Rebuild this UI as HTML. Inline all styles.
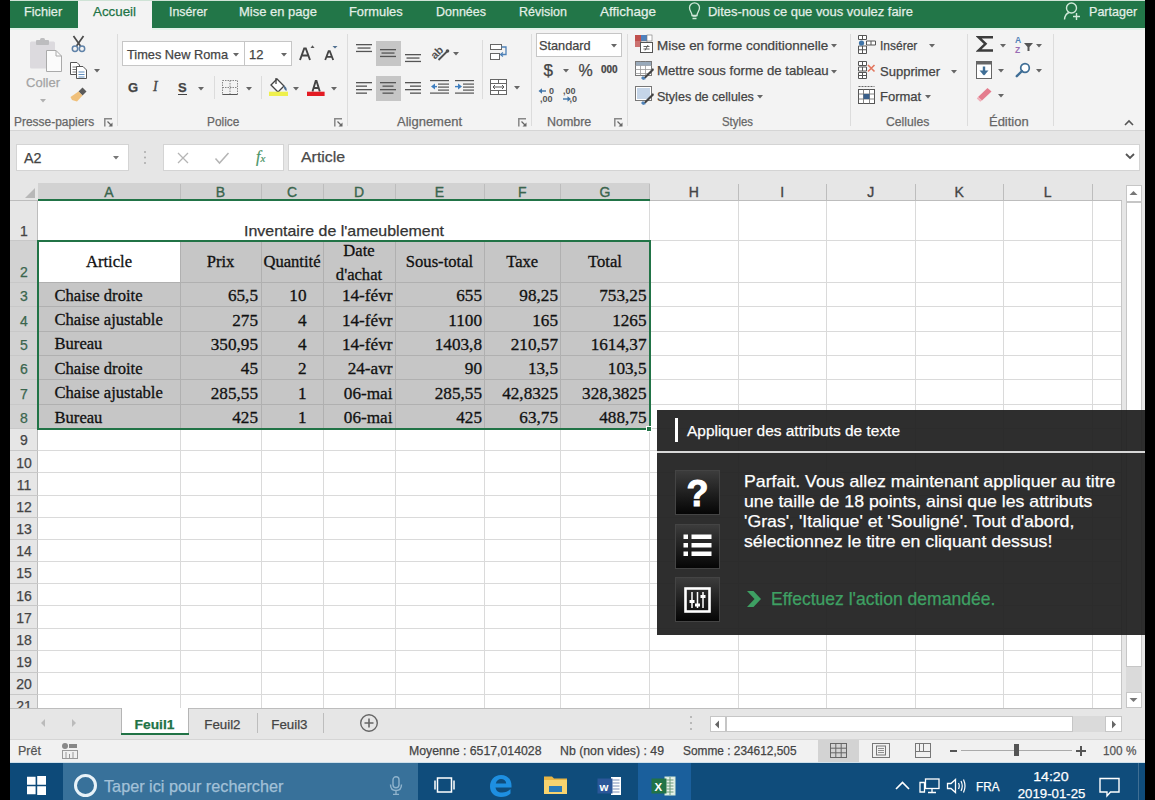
<!DOCTYPE html><html><head><meta charset="utf-8"><style>
*{box-sizing:border-box;margin:0;padding:0}
html,body{width:1155px;height:800px;overflow:hidden;background:#000;position:relative}
body>div,body>svg{position:absolute}
.t{white-space:nowrap;line-height:1}
.b{-webkit-text-stroke:0.3px currentColor}
</style></head><body>
<div style="left:10px;top:0px;width:1135px;height:763px;background:#e6e6e6"></div>
<div style="left:10px;top:0px;width:1135px;height:1px;background:#cfe3d6"></div>
<div style="left:10px;top:1px;width:1135px;height:27.5px;background:#227648"></div>
<div style="left:78px;top:1px;width:74px;height:28px;background:#f3f3f3"></div>
<div class="t" style="left:24.4px;top:4.77px;font-size:13.5px;color:#e3efe7;font-family:'Liberation Sans',sans-serif;-webkit-text-stroke:0.25px #e3efe7;"><span id="f0" style="display:inline-block;transform:scaleX(0.9428);transform-origin:left">Fichier</span></div>
<div class="t" style="left:168.5px;top:4.77px;font-size:13.5px;color:#e3efe7;font-family:'Liberation Sans',sans-serif;-webkit-text-stroke:0.25px #e3efe7;"><span id="f1" style="display:inline-block;transform:scaleX(0.9160);transform-origin:left">Insérer</span></div>
<div class="t" style="left:239px;top:4.77px;font-size:13.5px;color:#e3efe7;font-family:'Liberation Sans',sans-serif;-webkit-text-stroke:0.25px #e3efe7;"><span id="f2" style="display:inline-block;transform:scaleX(0.9622);transform-origin:left">Mise en page</span></div>
<div class="t" style="left:349.3px;top:4.77px;font-size:13.5px;color:#e3efe7;font-family:'Liberation Sans',sans-serif;-webkit-text-stroke:0.25px #e3efe7;"><span id="f3" style="display:inline-block;transform:scaleX(0.9544);transform-origin:left">Formules</span></div>
<div class="t" style="left:436px;top:4.77px;font-size:13.5px;color:#e3efe7;font-family:'Liberation Sans',sans-serif;-webkit-text-stroke:0.25px #e3efe7;"><span id="f4" style="display:inline-block;transform:scaleX(0.9251);transform-origin:left">Données</span></div>
<div class="t" style="left:519px;top:4.77px;font-size:13.5px;color:#e3efe7;font-family:'Liberation Sans',sans-serif;-webkit-text-stroke:0.25px #e3efe7;"><span id="f5" style="display:inline-block;transform:scaleX(0.9270);transform-origin:left">Révision</span></div>
<div class="t" style="left:599.6px;top:4.77px;font-size:13.5px;color:#e3efe7;font-family:'Liberation Sans',sans-serif;-webkit-text-stroke:0.25px #e3efe7;"><span id="f6" style="display:inline-block;transform:scaleX(0.9992);transform-origin:left">Affichage</span></div>
<div class="t" style="left:708px;top:4.77px;font-size:13.5px;color:#e3efe7;font-family:'Liberation Sans',sans-serif;-webkit-text-stroke:0.25px #e3efe7;"><span id="f7" style="display:inline-block;transform:scaleX(0.9585);transform-origin:left">Dites-nous ce que vous voulez faire</span></div>
<div class="t" style="left:1088.6px;top:4.77px;font-size:13.5px;color:#e3efe7;font-family:'Liberation Sans',sans-serif;-webkit-text-stroke:0.25px #e3efe7;"><span id="f8" style="display:inline-block;transform:scaleX(0.9308);transform-origin:left">Partager</span></div>
<div class="t" style="left:93px;top:4.77px;font-size:13.5px;color:#217346;font-family:'Liberation Sans',sans-serif;-webkit-text-stroke:0.25px #217346;"><span id="f9" style="display:inline-block;transform:scaleX(0.9878);transform-origin:left">Accueil</span></div>
<svg style="left:688px;top:2px;" width="13" height="18" viewBox="0 0 13 18"><path d="M4 13.5C4 10.5 1.5 9 1.5 5.8A5 5 0 0 1 11.5 5.8C11.5 9 9 10.5 9 13.5Z" fill="none" stroke="#cfe8d8" stroke-width="1.3"/><path d="M4.5 14H8.5M4.5 16.5H8.5" stroke="#cfe8d8" stroke-width="1.3"/></svg>
<svg style="left:1063px;top:1px;" width="20" height="20" viewBox="0 0 20 20"><circle cx="8.5" cy="7" r="5" fill="none" stroke="#cfe8d8" stroke-width="1.4"/><path d="M1.5 18.5Q2 13 6 11.5" fill="none" stroke="#cfe8d8" stroke-width="1.4"/><path d="M13.5 12V19M10 15.5H17" stroke="#cfe8d8" stroke-width="1.4"/></svg>
<div style="left:10px;top:28px;width:1135px;height:102px;background:#f3f3f3"></div>
<div style="left:10px;top:28px;width:1135px;height:1.5px;background:#e2f2e8"></div>
<div style="left:78px;top:28px;width:74px;height:2px;background:#f3f3f3"></div>
<div style="left:10px;top:130px;width:1135px;height:1px;background:#d5d5d5"></div>
<svg style="left:28px;top:37.5px;" width="36" height="38" viewBox="0 0 36 38"><rect x="2" y="3.5" width="25" height="27" rx="1.5" fill="#dcdade"/><rect x="8" y="2" width="13" height="5" rx="1" fill="#bdbdbf"/><rect x="12" y="0" width="5" height="4" rx="1.5" fill="#bdbdbf"/><path d="M18.5 12.5H28L33.5 18V33.5H18.5Z" fill="#fbfbfb" stroke="#aaa"/><path d="M28 12.5V18H33.5" fill="none" stroke="#aaa"/></svg>
<div class="t" style="left:25.8px;top:75.57px;font-size:13.5px;color:#a3a3a3;font-family:'Liberation Sans',sans-serif;-webkit-text-stroke:0.25px #a3a3a3;"><span id="f10" style="display:inline-block;transform:scaleX(0.9641);transform-origin:left">Coller</span></div>
<svg style="left:40px;top:98.5px;" width="6" height="4" viewBox="0 0 6 4"><path d="M0 0H6L3 3.5Z" fill="#b0b0b0"/></svg>
<svg style="left:70px;top:35px;" width="18" height="18" viewBox="0 0 18 18"><path d="M3.5 1L10.5 11M13.5 1L6.5 11" stroke="#4a4a4a" stroke-width="1.7" fill="none"/><circle cx="5" cy="13.8" r="2.7" fill="none" stroke="#5f82a8" stroke-width="1.5"/><circle cx="12" cy="13.8" r="2.7" fill="none" stroke="#5f82a8" stroke-width="1.5"/></svg>
<svg style="left:69px;top:61px;" width="19" height="18" viewBox="0 0 19 18"><path d="M1.5 1.5H8L10.5 4V13.5H1.5Z" fill="#fff" stroke="#555"/><path d="M3.5 6H8.5M3.5 8.5H8.5M3.5 11H8.5" stroke="#555" stroke-width="0.8"/><path d="M7.5 5.5H14L17.5 9V17.5H7.5Z" fill="#fff" stroke="#555"/><path d="M9.5 11H15.5M9.5 13.5H15.5M9.5 16H15.5" stroke="#4f82b8" stroke-width="0.9"/></svg>
<svg style="left:94px;top:68.5px;" width="6" height="4" viewBox="0 0 6 4"><path d="M0 0H6L3 3.5Z" fill="#666"/></svg>
<svg style="left:69px;top:86px;" width="20" height="17" viewBox="0 0 20 17"><path d="M13.5 1.5L17.5 5.5L13.5 9.5L9.5 5.5Z" fill="#5a5a5a"/><path d="M9.5 5.5L13.5 9.5L8 15.5L3 14L1.5 11Z" fill="#f0c07a"/></svg>
<div class="t" style="left:14px;top:116.42px;font-size:12.5px;color:#666;font-family:'Liberation Sans',sans-serif;-webkit-text-stroke:0.25px #666;"><span id="f11" style="display:inline-block;transform:scaleX(0.9551);transform-origin:left">Presse-papiers</span></div>
<svg style="left:104px;top:118px;" width="9" height="9" viewBox="0 0 9 9"><path d="M0.8 8.5V0.8H8" fill="none" stroke="#888" stroke-width="1.5"/><path d="M3.5 3.5L7 7" stroke="#666" stroke-width="1.2"/><path d="M8.5 4.5V8.5H4.5Z" fill="#666"/></svg>
<div style="left:117px;top:34px;width:1px;height:92px;background:#dcdcdc"></div>
<div style="left:122px;top:41px;width:123px;height:25px;background:#fff;border:1px solid #c6c6c6"></div>
<div style="left:244px;top:41px;width:48px;height:25px;background:#fff;border:1px solid #c6c6c6"></div>
<div class="t" style="left:126.5px;top:47.5px;font-size:13px;color:#444;font-family:'Liberation Sans',sans-serif;-webkit-text-stroke:0.25px #444;"><span id="f12" style="display:inline-block;transform:scaleX(0.9822);transform-origin:left">Times New Roma</span></div>
<svg style="left:232.5px;top:52.5px;" width="6" height="4" viewBox="0 0 6 4"><path d="M0 0H6L3 3.5Z" fill="#666"/></svg>
<div class="t" style="left:249px;top:47.5px;font-size:13px;color:#444;font-family:'Liberation Sans',sans-serif;-webkit-text-stroke:0.25px #444;">12</div>
<svg style="left:281px;top:52.5px;" width="6" height="4" viewBox="0 0 6 4"><path d="M0 0H6L3 3.5Z" fill="#666"/></svg>
<svg style="left:298px;top:44px;" width="18" height="18" viewBox="0 0 18 18"><path d="M2 16L6.2 4.5H7.8L12 16M3.8 11.5H10.2" fill="none" stroke="#444" stroke-width="1.9"/><path d="M12.5 4L14.5 1.2L16.5 4Z" fill="#555"/></svg>
<svg style="left:323px;top:46px;" width="18" height="16" viewBox="0 0 18 16"><path d="M2.2 14L5.6 5.2H6.8L10.2 14M3.6 10.8H8.8" fill="none" stroke="#444" stroke-width="1.8"/><path d="M9.5 0H14.5L12 2.6Z" fill="#4f6f90"/></svg>
<div class="t" style="left:128px;top:81.0px;font-size:13px;color:#444;font-family:'Liberation Sans',sans-serif;-webkit-text-stroke:0.25px #444;font-weight:bold">G</div>
<div class="t" style="left:153px;top:80.28px;font-size:14px;color:#444;font-family:'Liberation Serif',serif;-webkit-text-stroke:0.3px #444;font-style:italic">I</div>
<div class="t" style="left:178px;top:81.0px;font-size:13px;color:#444;font-family:'Liberation Sans',sans-serif;-webkit-text-stroke:0.25px #444;font-weight:bold">S</div>
<div style="left:178px;top:94px;width:9px;height:1px;background:#444"></div>
<svg style="left:198px;top:86.5px;" width="6" height="4" viewBox="0 0 6 4"><path d="M0 0H6L3 3.5Z" fill="#666"/></svg>
<div style="left:213.5px;top:76px;width:1px;height:23px;background:#dcdcdc"></div>
<svg style="left:221px;top:79px;" width="18" height="17" viewBox="0 0 18 17"><path d="M1.5 1.5H16.5V15.5H1.5Z" fill="none" stroke="#888" stroke-dasharray="1.5 1"/><path d="M9 1.5V15.5M1.5 8.5H16.5" stroke="#888" stroke-dasharray="1.5 1"/><path d="M1.5 15.5H16.5" stroke="#555"/></svg>
<svg style="left:245.5px;top:86.5px;" width="6" height="4" viewBox="0 0 6 4"><path d="M0 0H6L3 3.5Z" fill="#666"/></svg>
<div style="left:261px;top:76px;width:1px;height:23px;background:#dcdcdc"></div>
<svg style="left:268px;top:77px;" width="21" height="21" viewBox="0 0 21 21"><path d="M3 8L9 2L16 9L10 15Z" fill="#fff" stroke="#444" stroke-width="1.3"/><path d="M8 1V7" stroke="#444" stroke-width="1.3"/><path d="M15.5 8.5Q19.5 10 18.5 14Q16 13 15.5 8.5Z" fill="#4f6f90"/><rect x="1" y="14.7" width="19" height="4.3" fill="#eff04c"/></svg>
<svg style="left:293px;top:86.5px;" width="6" height="4" viewBox="0 0 6 4"><path d="M0 0H6L3 3.5Z" fill="#666"/></svg>
<svg style="left:306px;top:77px;" width="20" height="21" viewBox="0 0 20 21"><path d="M6.5 14.5L9.7 4H10.5L13.8 14.5M7.6 11H12.7" fill="none" stroke="#444" stroke-width="1.9"/><rect x="1" y="14.7" width="17.6" height="4.3" fill="#e31b23"/></svg>
<svg style="left:331px;top:86.5px;" width="6" height="4" viewBox="0 0 6 4"><path d="M0 0H6L3 3.5Z" fill="#666"/></svg>
<div class="t" style="left:206.6px;top:116.42px;font-size:12.5px;color:#666;font-family:'Liberation Sans',sans-serif;-webkit-text-stroke:0.25px #666;"><span id="f13" style="display:inline-block;transform:scaleX(0.9487);transform-origin:left">Police</span></div>
<svg style="left:334px;top:118px;" width="9" height="9" viewBox="0 0 9 9"><path d="M0.8 8.5V0.8H8" fill="none" stroke="#888" stroke-width="1.5"/><path d="M3.5 3.5L7 7" stroke="#666" stroke-width="1.2"/><path d="M8.5 4.5V8.5H4.5Z" fill="#666"/></svg>
<div style="left:346.5px;top:34px;width:1px;height:92px;background:#dcdcdc"></div>
<div style="left:375.5px;top:41px;width:25px;height:25px;background:#c6c6c6"></div>
<div style="left:375.5px;top:75.5px;width:25px;height:25px;background:#c6c6c6"></div>
<svg style="left:355.5px;top:44px;" width="18" height="14" viewBox="0 0 18 14"><rect x="0" y="0.0" width="16" height="1.3" fill="#555"/><rect x="1.5" y="3.4" width="13" height="1.3" fill="#555"/><rect x="0" y="6.8" width="16" height="1.3" fill="#555"/></svg>
<svg style="left:380px;top:48.5px;" width="18" height="14" viewBox="0 0 18 14"><rect x="0" y="0.0" width="16" height="1.3" fill="#555"/><rect x="1.5" y="3.4" width="13" height="1.3" fill="#555"/><rect x="0" y="6.8" width="16" height="1.3" fill="#555"/></svg>
<svg style="left:405px;top:53.8px;" width="18" height="14" viewBox="0 0 18 14"><rect x="0" y="0.0" width="16" height="1.3" fill="#555"/><rect x="1.5" y="3.4" width="13" height="1.3" fill="#555"/><rect x="0" y="6.8" width="16" height="1.3" fill="#555"/></svg>
<svg style="left:355.5px;top:81.5px;" width="18" height="14" viewBox="0 0 18 14"><rect x="0" y="0.0" width="16" height="1.3" fill="#555"/><rect x="0" y="3.5" width="11" height="1.3" fill="#555"/><rect x="0" y="7.0" width="16" height="1.3" fill="#555"/><rect x="0" y="10.5" width="11" height="1.3" fill="#555"/></svg>
<svg style="left:380px;top:81.5px;" width="18" height="14" viewBox="0 0 18 14"><rect x="0" y="0.0" width="16" height="1.3" fill="#555"/><rect x="2.5" y="3.5" width="11" height="1.3" fill="#555"/><rect x="0" y="7.0" width="16" height="1.3" fill="#555"/><rect x="2.5" y="10.5" width="11" height="1.3" fill="#555"/></svg>
<svg style="left:405px;top:81.5px;" width="18" height="14" viewBox="0 0 18 14"><rect x="0" y="0.0" width="16" height="1.3" fill="#555"/><rect x="5" y="3.5" width="11" height="1.3" fill="#555"/><rect x="0" y="7.0" width="16" height="1.3" fill="#555"/><rect x="5" y="10.5" width="11" height="1.3" fill="#555"/></svg>
<svg style="left:428px;top:42px;" width="22" height="22" viewBox="0 0 22 22"><g transform="rotate(-45 9 10)"><text x="2" y="14" font-family="Liberation Sans" font-size="11" font-weight="bold" fill="#505050">ab</text></g><path d="M10.5 18L19 9.5" stroke="#505050" stroke-width="1.8"/><circle cx="19.5" cy="9" r="1.8" fill="#505050"/></svg>
<svg style="left:453px;top:51.5px;" width="6" height="4" viewBox="0 0 6 4"><path d="M0 0H6L3 3.5Z" fill="#666"/></svg>
<svg style="left:430px;top:80px;" width="20" height="14" viewBox="0 0 20 14"><rect x="0" y="12.5" width="19" height="1.2" fill="#555"/><rect x="0" y="0" width="19" height="1.2" fill="#555"/><rect x="8" y="3.5" width="11" height="1.2" fill="#555"/><rect x="8" y="6.5" width="11" height="1.2" fill="#555"/><rect x="8" y="9.5" width="11" height="1.2" fill="#555"/><path d="M1 6.5L5 3.5V9.5Z" fill="#3f7fc0"/><rect x="3" y="5.9" width="4" height="1.4" fill="#3f7fc0"/></svg>
<svg style="left:455px;top:80px;" width="20" height="14" viewBox="0 0 20 14"><rect x="0" y="12.5" width="19" height="1.2" fill="#555"/><rect x="0" y="0" width="19" height="1.2" fill="#555"/><rect x="8" y="3.5" width="11" height="1.2" fill="#555"/><rect x="8" y="6.5" width="11" height="1.2" fill="#555"/><rect x="8" y="9.5" width="11" height="1.2" fill="#555"/><path d="M7 6.5L3 3.5V9.5Z" fill="#3f7fc0"/><rect x="0" y="5.9" width="4" height="1.4" fill="#3f7fc0"/></svg>
<div style="left:481.5px;top:40px;width:1px;height:59px;background:#dcdcdc"></div>
<svg style="left:489px;top:43px;" width="20" height="19" viewBox="0 0 20 19"><rect x="1.5" y="1.5" width="11" height="5" fill="#fff" stroke="#666"/><rect x="1.5" y="10.5" width="9" height="6" fill="#fff" stroke="#666"/><path d="M12.5 4H17V11.5H12" fill="none" stroke="#4f82b8" stroke-width="1.3"/><path d="M14 9.5L11.5 11.5L14 13.5" fill="none" stroke="#4f82b8" stroke-width="1.3"/></svg>
<svg style="left:489px;top:78px;" width="19" height="18" viewBox="0 0 19 18"><rect x="1.5" y="1.5" width="16" height="15" fill="#fff" stroke="#666"/><path d="M1.5 5.5H17.5M1.5 12.5H17.5M9.5 1.5V5.5M9.5 12.5V16.5" stroke="#666"/><path d="M4 9H15M6 7L4 9L6 11M13 7L15 9L13 11" fill="none" stroke="#555" stroke-width="1"/></svg>
<svg style="left:513.5px;top:85.5px;" width="6" height="4" viewBox="0 0 6 4"><path d="M0 0H6L3 3.5Z" fill="#666"/></svg>
<div class="t" style="left:397px;top:116.42px;font-size:12.5px;color:#666;font-family:'Liberation Sans',sans-serif;-webkit-text-stroke:0.25px #666;"><span id="f14" style="display:inline-block;transform:scaleX(1.0392);transform-origin:left">Alignement</span></div>
<svg style="left:518px;top:118px;" width="9" height="9" viewBox="0 0 9 9"><path d="M0.8 8.5V0.8H8" fill="none" stroke="#888" stroke-width="1.5"/><path d="M3.5 3.5L7 7" stroke="#666" stroke-width="1.2"/><path d="M8.5 4.5V8.5H4.5Z" fill="#666"/></svg>
<div style="left:530.5px;top:34px;width:1px;height:92px;background:#dcdcdc"></div>
<div style="left:535.5px;top:32.5px;width:86px;height:24.5px;background:#fff;border:1px solid #c6c6c6"></div>
<div class="t" style="left:538.9px;top:38.5px;font-size:13px;color:#444;font-family:'Liberation Sans',sans-serif;-webkit-text-stroke:0.25px #444;"><span id="f15" style="display:inline-block;transform:scaleX(0.9779);transform-origin:left">Standard</span></div>
<svg style="left:610.5px;top:43.5px;" width="6" height="4" viewBox="0 0 6 4"><path d="M0 0H6L3 3.5Z" fill="#666"/></svg>
<div class="t" style="left:543.5px;top:61.61px;font-size:17px;color:#444;font-family:'Liberation Sans',sans-serif;-webkit-text-stroke:0.25px #444;">$</div>
<svg style="left:563px;top:68.5px;" width="6" height="4" viewBox="0 0 6 4"><path d="M0 0H6L3 3.5Z" fill="#666"/></svg>
<div class="t" style="left:578.5px;top:63.26px;font-size:16px;color:#444;font-family:'Liberation Sans',sans-serif;-webkit-text-stroke:0.25px #444;">%</div>
<div class="t" style="left:601px;top:65.03px;font-size:10px;color:#444;font-family:'Liberation Sans',sans-serif;-webkit-text-stroke:0.25px #444;font-weight:bold">000</div>
<svg style="left:537px;top:85px;" width="20" height="19" viewBox="0 0 20 19"><text x="12" y="9" font-family="Liberation Sans" font-size="9" font-weight="bold" fill="#555">0</text><text x="3" y="16.8" font-family="Liberation Sans" font-size="9" font-weight="bold" fill="#555">,00</text><path d="M1.5 6L5 3.2V8.8Z" fill="#3f74a8"/><rect x="4" y="5.3" width="5" height="1.4" fill="#3f74a8"/></svg>
<svg style="left:561px;top:85px;" width="20" height="19" viewBox="0 0 20 19"><text x="2" y="9" font-family="Liberation Sans" font-size="9" font-weight="bold" fill="#555">,00</text><text x="8.5" y="16.8" font-family="Liberation Sans" font-size="9" font-weight="bold" fill="#555">,0</text><path d="M10 14L6.5 11.2V16.8Z" fill="#3f74a8"/><rect x="2" y="13.3" width="5" height="1.4" fill="#3f74a8"/></svg>
<div class="t" style="left:547px;top:116.42px;font-size:12.5px;color:#666;font-family:'Liberation Sans',sans-serif;-webkit-text-stroke:0.25px #666;"><span id="f16" style="display:inline-block;transform:scaleX(0.9962);transform-origin:left">Nombre</span></div>
<svg style="left:614px;top:118px;" width="9" height="9" viewBox="0 0 9 9"><path d="M0.8 8.5V0.8H8" fill="none" stroke="#888" stroke-width="1.5"/><path d="M3.5 3.5L7 7" stroke="#666" stroke-width="1.2"/><path d="M8.5 4.5V8.5H4.5Z" fill="#666"/></svg>
<div style="left:627px;top:34px;width:1px;height:92px;background:#dcdcdc"></div>
<svg style="left:634px;top:34px;" width="20" height="20" viewBox="0 0 20 20"><rect x="1" y="1" width="6" height="6" fill="#c0504d"/><rect x="1" y="7" width="6" height="6" fill="#c0504d" opacity=".8"/><rect x="7" y="1" width="6" height="6" fill="#4f81bd"/><rect x="7" y="7" width="6" height="6" fill="#fff" stroke="#777" stroke-width=".6"/><rect x="13" y="1" width="5" height="6" fill="#fff" stroke="#777" stroke-width=".6"/><rect x="6.5" y="8.5" width="12" height="10" fill="#fff" stroke="#555"/><path d="M9.5 12.5H15.5M9.5 15H15.5M14 11L11 16.5" stroke="#555" stroke-width=".9"/></svg>
<div class="t" style="left:656.6px;top:38.5px;font-size:13px;color:#444;font-family:'Liberation Sans',sans-serif;-webkit-text-stroke:0.25px #444;"><span id="f17" style="display:inline-block;transform:scaleX(1.0345);transform-origin:left">Mise en forme conditionnelle</span></div>
<svg style="left:830.5px;top:43.5px;" width="6" height="4" viewBox="0 0 6 4"><path d="M0 0H6L3 3.5Z" fill="#666"/></svg>
<svg style="left:634px;top:60px;" width="20" height="20" viewBox="0 0 20 20"><rect x="1.5" y="1.5" width="16" height="14" fill="#fff" stroke="#777"/><path d="M1.5 5.5H17.5M1.5 9.5H17.5M1.5 13.5H17.5M6.5 1.5V15.5M11.5 1.5V15.5" stroke="#999" stroke-width=".8"/><rect x="2" y="2" width="15" height="3.5" fill="#9ab"/><path d="M19 8L11 16L9 19L12 18L20 10Z" fill="#444"/><path d="M9 16L12 19L9 20L7 18Z" fill="#4f82b8"/></svg>
<div class="t" style="left:656.6px;top:64.0px;font-size:13px;color:#444;font-family:'Liberation Sans',sans-serif;-webkit-text-stroke:0.25px #444;"><span id="f18" style="display:inline-block;transform:scaleX(1.0148);transform-origin:left">Mettre sous forme de tableau</span></div>
<svg style="left:830.5px;top:69.5px;" width="6" height="4" viewBox="0 0 6 4"><path d="M0 0H6L3 3.5Z" fill="#666"/></svg>
<svg style="left:634px;top:85px;" width="20" height="20" viewBox="0 0 20 20"><rect x="1.5" y="1.5" width="16" height="14" fill="#fff" stroke="#777"/><rect x="3" y="3" width="13" height="11" fill="#c5d5e8"/><path d="M19 8L11 16L9 19L12 18L20 10Z" fill="#444"/><path d="M9 16L12 19L9 20L7 18Z" fill="#4f82b8"/></svg>
<div class="t" style="left:656.6px;top:89.5px;font-size:13px;color:#444;font-family:'Liberation Sans',sans-serif;-webkit-text-stroke:0.25px #444;"><span id="f19" style="display:inline-block;transform:scaleX(0.9646);transform-origin:left">Styles de cellules</span></div>
<svg style="left:756.5px;top:94.5px;" width="6" height="4" viewBox="0 0 6 4"><path d="M0 0H6L3 3.5Z" fill="#666"/></svg>
<div class="t" style="left:722px;top:116.42px;font-size:12.5px;color:#666;font-family:'Liberation Sans',sans-serif;-webkit-text-stroke:0.25px #666;"><span id="f20" style="display:inline-block;transform:scaleX(0.9105);transform-origin:left">Styles</span></div>
<div style="left:849.5px;top:34px;width:1px;height:92px;background:#dcdcdc"></div>
<svg style="left:857px;top:35px;" width="20" height="19" viewBox="0 0 20 19"><path d="M1.5 0.5H9.5V4.5H1.5Z M5.5 0.5V4.5 M1.5 11H9.5V18.5H1.5Z M1.5 14.75H9.5 M5.5 11V18.5 M9.5 6H18.5V10H9.5Z M14 6V10" fill="#fff" stroke="#555" stroke-width="1"/><circle cx="4.5" cy="8" r="2.6" fill="#3f74a8"/></svg>
<div class="t" style="left:879.7px;top:39.0px;font-size:13px;color:#444;font-family:'Liberation Sans',sans-serif;-webkit-text-stroke:0.25px #444;"><span id="f21" style="display:inline-block;transform:scaleX(0.9217);transform-origin:left">Insérer</span></div>
<svg style="left:929px;top:43.5px;" width="6" height="4" viewBox="0 0 6 4"><path d="M0 0H6L3 3.5Z" fill="#666"/></svg>
<svg style="left:857px;top:60px;" width="20" height="19" viewBox="0 0 20 19"><path d="M1.5 1.5H9.5V5.5H1.5Z M5.5 1.5V5.5 M1.5 12.5H9.5V18.5H1.5Z M1.5 15.5H9.5 M5.5 12.5V18.5 M1.5 7H9.5V11H1.5Z M5.5 7V11" fill="#fff" stroke="#555" stroke-width="1"/><path d="M11 5L17.5 11.5M17.5 5L11 11.5" stroke="#e2775f" stroke-width="1.6"/></svg>
<div class="t" style="left:879.7px;top:64.5px;font-size:13px;color:#444;font-family:'Liberation Sans',sans-serif;-webkit-text-stroke:0.25px #444;"><span id="f22" style="display:inline-block;transform:scaleX(1.0005);transform-origin:left">Supprimer</span></div>
<svg style="left:950.5px;top:69.5px;" width="6" height="4" viewBox="0 0 6 4"><path d="M0 0H6L3 3.5Z" fill="#666"/></svg>
<svg style="left:857px;top:85px;" width="20" height="20" viewBox="0 0 20 20"><rect x="1.5" y="4.5" width="16" height="14" fill="#fff" stroke="#555"/><path d="M1.5 9H17.5M1.5 14H17.5M6.5 4.5V18.5M12.5 4.5V18.5" stroke="#777" stroke-width=".9"/><rect x="6.5" y="9" width="6" height="5" fill="#3a5f8a"/><path d="M1.5 1.5H17.5" stroke="#666" stroke-dasharray="2 1"/></svg>
<div class="t" style="left:879.7px;top:90.0px;font-size:13px;color:#444;font-family:'Liberation Sans',sans-serif;-webkit-text-stroke:0.25px #444;"><span id="f23" style="display:inline-block;transform:scaleX(1.0007);transform-origin:left">Format</span></div>
<svg style="left:924.5px;top:94.5px;" width="6" height="4" viewBox="0 0 6 4"><path d="M0 0H6L3 3.5Z" fill="#666"/></svg>
<div class="t" style="left:886.2px;top:116.42px;font-size:12.5px;color:#666;font-family:'Liberation Sans',sans-serif;-webkit-text-stroke:0.25px #666;"><span id="f24" style="display:inline-block;transform:scaleX(0.9737);transform-origin:left">Cellules</span></div>
<div style="left:967px;top:34px;width:1px;height:92px;background:#dcdcdc"></div>
<svg style="left:975.5px;top:35px;" width="19" height="18" viewBox="0 0 19 18"><path d="M17 2.2H2.5L9.5 8.8L2.5 15.5H17" fill="none" stroke="#3c3c3c" stroke-width="2.5" stroke-linejoin="miter"/></svg>
<svg style="left:999.5px;top:43.5px;" width="6" height="4" viewBox="0 0 6 4"><path d="M0 0H6L3 3.5Z" fill="#666"/></svg>
<svg style="left:1014px;top:35px;" width="20" height="19" viewBox="0 0 20 19"><text x="1" y="8" font-family="Liberation Sans" font-size="8.5" font-weight="bold" fill="#4f82b8">A</text><text x="1" y="17.5" font-family="Liberation Sans" font-size="8.5" font-weight="bold" fill="#9a6db5">Z</text><path d="M10 8H19L15.5 12V16H13.5V12Z" fill="#555"/></svg>
<svg style="left:1036px;top:43.5px;" width="6" height="4" viewBox="0 0 6 4"><path d="M0 0H6L3 3.5Z" fill="#666"/></svg>
<svg style="left:976px;top:61px;" width="16" height="18" viewBox="0 0 16 18"><rect x="0.5" y="0.5" width="15" height="17" fill="#fff" stroke="#666"/><rect x="0.5" y="0.5" width="15" height="3" fill="#666"/><path d="M8 5.5V13.5" stroke="#3f6e96" stroke-width="2.4"/><path d="M3.5 9.5L8 14.5L12.5 9.5Z" fill="#3f6e96"/></svg>
<svg style="left:997.5px;top:68.5px;" width="6" height="4" viewBox="0 0 6 4"><path d="M0 0H6L3 3.5Z" fill="#666"/></svg>
<svg style="left:1015px;top:62px;" width="16" height="16" viewBox="0 0 16 16"><circle cx="10" cy="6" r="4.3" fill="#fff" stroke="#3f6e96" stroke-width="1.7"/><path d="M7 9L1.8 14.2" stroke="#3f6e96" stroke-width="2.4" stroke-linecap="round"/></svg>
<svg style="left:1036px;top:68.5px;" width="6" height="4" viewBox="0 0 6 4"><path d="M0 0H6L3 3.5Z" fill="#666"/></svg>
<svg style="left:976px;top:87px;" width="17" height="15" viewBox="0 0 17 15"><path d="M11.5 1L15.5 4.5L6 13.5L2 10Z" fill="#e47d8e"/><path d="M2 10L6 13.5L4.2 14.8L0.8 11.6Z" fill="#f0b0ba"/></svg>
<svg style="left:997.5px;top:93.5px;" width="6" height="4" viewBox="0 0 6 4"><path d="M0 0H6L3 3.5Z" fill="#666"/></svg>
<div class="t" style="left:989.3px;top:116.42px;font-size:12.5px;color:#666;font-family:'Liberation Sans',sans-serif;-webkit-text-stroke:0.25px #666;"><span id="f25" style="display:inline-block;transform:scaleX(1.0383);transform-origin:left">&#201;dition</span></div>
<div style="left:1053px;top:34px;width:1px;height:92px;background:#dcdcdc"></div>
<svg style="left:1124px;top:119px;" width="10" height="7" viewBox="0 0 10 7"><path d="M1 6L5 2L9 6" fill="none" stroke="#555" stroke-width="1.6"/></svg>
<div style="left:16px;top:143.5px;width:112.5px;height:27.5px;background:#fff;border:1px solid #d4d4d4"></div>
<div class="t" style="left:23.5px;top:150.75px;font-size:14px;color:#444;font-family:'Liberation Sans',sans-serif;-webkit-text-stroke:0.25px #444;"><span id="f26" style="display:inline-block;transform:scaleX(1.0219);transform-origin:left">A2</span></div>
<svg style="left:113px;top:155.5px;" width="6" height="4" viewBox="0 0 6 4"><path d="M0 0H6L3 3.5Z" fill="#777"/></svg>
<svg style="left:143px;top:150px;" width="4" height="16" viewBox="0 0 4 16"><circle cx="2" cy="2" r="1" fill="#aaa"/><circle cx="2" cy="7.5" r="1" fill="#aaa"/><circle cx="2" cy="13" r="1" fill="#aaa"/></svg>
<div style="left:162.5px;top:143.5px;width:121px;height:27.5px;background:#fff;border:1px solid #d4d4d4"></div>
<svg style="left:176px;top:151px;" width="14" height="14" viewBox="0 0 14 14"><path d="M2 2L12 12M12 2L2 12" stroke="#b5b5b5" stroke-width="1.3"/></svg>
<svg style="left:214px;top:151px;" width="16" height="14" viewBox="0 0 16 14"><path d="M1.5 7.5L5.5 12L14.5 2" fill="none" stroke="#b5b5b5" stroke-width="1.5"/></svg>
<div class="t" style="left:256px;top:148.6px;font-size:16px;color:#4a9466;font-family:'Liberation Serif',serif;-webkit-text-stroke:0.2px #4a9466;"><i>f</i><span style="font-size:11px"><i>x</i></span></div>
<div style="left:287.5px;top:143.5px;width:852px;height:27.5px;background:#fff;border:1px solid #d4d4d4"></div>
<div class="t" style="left:300.8px;top:150.13px;font-size:14.5px;color:#4a4a4a;font-family:'Liberation Sans',sans-serif;-webkit-text-stroke:0.25px #4a4a4a;"><span id="f27" style="display:inline-block;transform:scaleX(1.0969);transform-origin:left">Article</span></div>
<svg style="left:1125px;top:153px;" width="10" height="7" viewBox="0 0 10 7"><path d="M1 1L5 5L9 1" fill="none" stroke="#555" stroke-width="1.8"/></svg>
<div style="left:10px;top:183px;width:1111.5px;height:18px;background:#e6e6e6"></div>
<div style="left:38px;top:183px;width:611.5px;height:17px;background:#d2d2d2"></div>
<div style="left:10px;top:201px;width:28px;height:507px;background:#e6e6e6"></div>
<div style="left:10px;top:240.5px;width:28px;height:188px;background:#d2d2d2"></div>
<div style="left:38px;top:201px;width:1083.5px;height:507px;background:#fff"></div>
<div style="left:38px;top:240.5px;width:611.5px;height:188px;background:#c6c6c6"></div>
<div style="left:38px;top:240.5px;width:142px;height:41.5px;background:#fff"></div>
<div style="left:649.0px;top:201px;width:1px;height:507px;background:#dadada"></div>
<div style="left:737.5px;top:201px;width:1px;height:507px;background:#dadada"></div>
<div style="left:826.0px;top:201px;width:1px;height:507px;background:#dadada"></div>
<div style="left:914.5px;top:201px;width:1px;height:507px;background:#dadada"></div>
<div style="left:1003.0px;top:201px;width:1px;height:507px;background:#dadada"></div>
<div style="left:1091.5px;top:201px;width:1px;height:507px;background:#dadada"></div>
<div style="left:38px;top:240.0px;width:1083.5px;height:1px;background:#dadada"></div>
<div style="left:38px;top:281.5px;width:1083.5px;height:1px;background:#dadada"></div>
<div style="left:38px;top:306.0px;width:1083.5px;height:1px;background:#dadada"></div>
<div style="left:38px;top:330.5px;width:1083.5px;height:1px;background:#dadada"></div>
<div style="left:38px;top:354.5px;width:1083.5px;height:1px;background:#dadada"></div>
<div style="left:38px;top:379.0px;width:1083.5px;height:1px;background:#dadada"></div>
<div style="left:38px;top:403.5px;width:1083.5px;height:1px;background:#dadada"></div>
<div style="left:38px;top:427.8px;width:1083.5px;height:1px;background:#dadada"></div>
<div style="left:38px;top:450.18px;width:1083.5px;height:1px;background:#dadada"></div>
<div style="left:38px;top:472.36px;width:1083.5px;height:1px;background:#dadada"></div>
<div style="left:38px;top:494.54px;width:1083.5px;height:1px;background:#dadada"></div>
<div style="left:38px;top:516.72px;width:1083.5px;height:1px;background:#dadada"></div>
<div style="left:38px;top:538.9px;width:1083.5px;height:1px;background:#dadada"></div>
<div style="left:38px;top:561.08px;width:1083.5px;height:1px;background:#dadada"></div>
<div style="left:38px;top:583.26px;width:1083.5px;height:1px;background:#dadada"></div>
<div style="left:38px;top:605.44px;width:1083.5px;height:1px;background:#dadada"></div>
<div style="left:38px;top:627.62px;width:1083.5px;height:1px;background:#dadada"></div>
<div style="left:38px;top:649.8px;width:1083.5px;height:1px;background:#dadada"></div>
<div style="left:38px;top:671.98px;width:1083.5px;height:1px;background:#dadada"></div>
<div style="left:38px;top:694.16px;width:1083.5px;height:1px;background:#dadada"></div>
<div style="left:179.5px;top:428.5px;width:1px;height:279.5px;background:#dadada"></div>
<div style="left:179.5px;top:240.5px;width:1px;height:188px;background:#b0b0b0"></div>
<div style="left:260.5px;top:428.5px;width:1px;height:279.5px;background:#dadada"></div>
<div style="left:260.5px;top:240.5px;width:1px;height:188px;background:#b0b0b0"></div>
<div style="left:322.5px;top:428.5px;width:1px;height:279.5px;background:#dadada"></div>
<div style="left:322.5px;top:240.5px;width:1px;height:188px;background:#b0b0b0"></div>
<div style="left:394.5px;top:428.5px;width:1px;height:279.5px;background:#dadada"></div>
<div style="left:394.5px;top:240.5px;width:1px;height:188px;background:#b0b0b0"></div>
<div style="left:483.5px;top:428.5px;width:1px;height:279.5px;background:#dadada"></div>
<div style="left:483.5px;top:240.5px;width:1px;height:188px;background:#b0b0b0"></div>
<div style="left:560.0px;top:428.5px;width:1px;height:279.5px;background:#dadada"></div>
<div style="left:560.0px;top:240.5px;width:1px;height:188px;background:#b0b0b0"></div>
<div style="left:38px;top:281.5px;width:611.5px;height:1px;background:#b0b0b0"></div>
<div style="left:38px;top:306.0px;width:611.5px;height:1px;background:#b0b0b0"></div>
<div style="left:38px;top:330.5px;width:611.5px;height:1px;background:#b0b0b0"></div>
<div style="left:38px;top:354.5px;width:611.5px;height:1px;background:#b0b0b0"></div>
<div style="left:38px;top:379.0px;width:611.5px;height:1px;background:#b0b0b0"></div>
<div style="left:38px;top:403.5px;width:611.5px;height:1px;background:#b0b0b0"></div>
<div style="left:179.5px;top:184px;width:1px;height:17px;background:#bdbdbd"></div>
<div style="left:260.5px;top:184px;width:1px;height:17px;background:#bdbdbd"></div>
<div style="left:322.5px;top:184px;width:1px;height:17px;background:#bdbdbd"></div>
<div style="left:394.5px;top:184px;width:1px;height:17px;background:#bdbdbd"></div>
<div style="left:483.5px;top:184px;width:1px;height:17px;background:#bdbdbd"></div>
<div style="left:560.0px;top:184px;width:1px;height:17px;background:#bdbdbd"></div>
<div style="left:649.0px;top:184px;width:1px;height:17px;background:#bdbdbd"></div>
<div style="left:737.5px;top:184px;width:1px;height:17px;background:#bdbdbd"></div>
<div style="left:826.0px;top:184px;width:1px;height:17px;background:#bdbdbd"></div>
<div style="left:914.5px;top:184px;width:1px;height:17px;background:#bdbdbd"></div>
<div style="left:1003.0px;top:184px;width:1px;height:17px;background:#bdbdbd"></div>
<div style="left:1091.5px;top:184px;width:1px;height:17px;background:#bdbdbd"></div>
<div style="left:10px;top:200px;width:1111.5px;height:1px;background:#bdbdbd"></div>
<div style="left:38px;top:199px;width:611.5px;height:2px;background:#217346"></div>
<div style="left:37px;top:201px;width:1px;height:507px;background:#bdbdbd"></div>
<div style="left:10px;top:240.0px;width:28px;height:1px;background:#c8c8c8"></div>
<div style="left:10px;top:281.5px;width:28px;height:1px;background:#c8c8c8"></div>
<div style="left:10px;top:306.0px;width:28px;height:1px;background:#c8c8c8"></div>
<div style="left:10px;top:330.5px;width:28px;height:1px;background:#c8c8c8"></div>
<div style="left:10px;top:354.5px;width:28px;height:1px;background:#c8c8c8"></div>
<div style="left:10px;top:379.0px;width:28px;height:1px;background:#c8c8c8"></div>
<div style="left:10px;top:403.5px;width:28px;height:1px;background:#c8c8c8"></div>
<div style="left:10px;top:427.8px;width:28px;height:1px;background:#c8c8c8"></div>
<div style="left:10px;top:450.18px;width:28px;height:1px;background:#c8c8c8"></div>
<div style="left:10px;top:472.36px;width:28px;height:1px;background:#c8c8c8"></div>
<div style="left:10px;top:494.54px;width:28px;height:1px;background:#c8c8c8"></div>
<div style="left:10px;top:516.72px;width:28px;height:1px;background:#c8c8c8"></div>
<div style="left:10px;top:538.9px;width:28px;height:1px;background:#c8c8c8"></div>
<div style="left:10px;top:561.08px;width:28px;height:1px;background:#c8c8c8"></div>
<div style="left:10px;top:583.26px;width:28px;height:1px;background:#c8c8c8"></div>
<div style="left:10px;top:605.44px;width:28px;height:1px;background:#c8c8c8"></div>
<div style="left:10px;top:627.62px;width:28px;height:1px;background:#c8c8c8"></div>
<div style="left:10px;top:649.8px;width:28px;height:1px;background:#c8c8c8"></div>
<div style="left:10px;top:671.98px;width:28px;height:1px;background:#c8c8c8"></div>
<div style="left:10px;top:694.16px;width:28px;height:1px;background:#c8c8c8"></div>
<svg style="left:24px;top:187px;" width="12" height="12" viewBox="0 0 12 12"><path d="M11 1V11H1Z" fill="#b8b8b8"/></svg>
<div class="t" style="left:69.0px;top:185.15px;width:80px;text-align:center;font-size:14px;color:#3a654d;font-family:'Liberation Sans',sans-serif;-webkit-text-stroke:0.35px #3a654d;">A</div>
<div class="t" style="left:180.5px;top:185.15px;width:80px;text-align:center;font-size:14px;color:#3a654d;font-family:'Liberation Sans',sans-serif;-webkit-text-stroke:0.35px #3a654d;">B</div>
<div class="t" style="left:252.0px;top:185.15px;width:80px;text-align:center;font-size:14px;color:#3a654d;font-family:'Liberation Sans',sans-serif;-webkit-text-stroke:0.35px #3a654d;">C</div>
<div class="t" style="left:319.0px;top:185.15px;width:80px;text-align:center;font-size:14px;color:#3a654d;font-family:'Liberation Sans',sans-serif;-webkit-text-stroke:0.35px #3a654d;">D</div>
<div class="t" style="left:399.5px;top:185.15px;width:80px;text-align:center;font-size:14px;color:#3a654d;font-family:'Liberation Sans',sans-serif;-webkit-text-stroke:0.35px #3a654d;">E</div>
<div class="t" style="left:482.25px;top:185.15px;width:80px;text-align:center;font-size:14px;color:#3a654d;font-family:'Liberation Sans',sans-serif;-webkit-text-stroke:0.35px #3a654d;">F</div>
<div class="t" style="left:565.0px;top:185.15px;width:80px;text-align:center;font-size:14px;color:#3a654d;font-family:'Liberation Sans',sans-serif;-webkit-text-stroke:0.35px #3a654d;">G</div>
<div class="t" style="left:653.75px;top:185.15px;width:80px;text-align:center;font-size:14px;color:#444;font-family:'Liberation Sans',sans-serif;-webkit-text-stroke:0.35px #444;">H</div>
<div class="t" style="left:742.25px;top:185.15px;width:80px;text-align:center;font-size:14px;color:#444;font-family:'Liberation Sans',sans-serif;-webkit-text-stroke:0.35px #444;">I</div>
<div class="t" style="left:830.75px;top:185.15px;width:80px;text-align:center;font-size:14px;color:#444;font-family:'Liberation Sans',sans-serif;-webkit-text-stroke:0.35px #444;">J</div>
<div class="t" style="left:919.25px;top:185.15px;width:80px;text-align:center;font-size:14px;color:#444;font-family:'Liberation Sans',sans-serif;-webkit-text-stroke:0.35px #444;">K</div>
<div class="t" style="left:1007.75px;top:185.15px;width:80px;text-align:center;font-size:14px;color:#444;font-family:'Liberation Sans',sans-serif;-webkit-text-stroke:0.35px #444;">L</div>
<div class="t" style="left:10.0px;top:224.15px;width:28px;text-align:center;font-size:14px;color:#444;font-family:'Liberation Sans',sans-serif;-webkit-text-stroke:0.25px #444;">1</div>
<div class="t" style="left:10.0px;top:265.15px;width:28px;text-align:center;font-size:14px;color:#3a654d;font-family:'Liberation Sans',sans-serif;-webkit-text-stroke:0.25px #3a654d;">2</div>
<div class="t" style="left:10.0px;top:289.15px;width:28px;text-align:center;font-size:14px;color:#3a654d;font-family:'Liberation Sans',sans-serif;-webkit-text-stroke:0.25px #3a654d;">3</div>
<div class="t" style="left:10.0px;top:313.65px;width:28px;text-align:center;font-size:14px;color:#3a654d;font-family:'Liberation Sans',sans-serif;-webkit-text-stroke:0.25px #3a654d;">4</div>
<div class="t" style="left:10.0px;top:337.65px;width:28px;text-align:center;font-size:14px;color:#3a654d;font-family:'Liberation Sans',sans-serif;-webkit-text-stroke:0.25px #3a654d;">5</div>
<div class="t" style="left:10.0px;top:362.15px;width:28px;text-align:center;font-size:14px;color:#3a654d;font-family:'Liberation Sans',sans-serif;-webkit-text-stroke:0.25px #3a654d;">6</div>
<div class="t" style="left:10.0px;top:386.65px;width:28px;text-align:center;font-size:14px;color:#3a654d;font-family:'Liberation Sans',sans-serif;-webkit-text-stroke:0.25px #3a654d;">7</div>
<div class="t" style="left:10.0px;top:410.95px;width:28px;text-align:center;font-size:14px;color:#3a654d;font-family:'Liberation Sans',sans-serif;-webkit-text-stroke:0.25px #3a654d;">8</div>
<div class="t" style="left:10.0px;top:433.33px;width:28px;text-align:center;font-size:14px;color:#444;font-family:'Liberation Sans',sans-serif;-webkit-text-stroke:0.25px #444;">9</div>
<div class="t" style="left:10.0px;top:455.51px;width:28px;text-align:center;font-size:14px;color:#444;font-family:'Liberation Sans',sans-serif;-webkit-text-stroke:0.25px #444;">10</div>
<div class="t" style="left:10.0px;top:477.69px;width:28px;text-align:center;font-size:14px;color:#444;font-family:'Liberation Sans',sans-serif;-webkit-text-stroke:0.25px #444;">11</div>
<div class="t" style="left:10.0px;top:499.87px;width:28px;text-align:center;font-size:14px;color:#444;font-family:'Liberation Sans',sans-serif;-webkit-text-stroke:0.25px #444;">12</div>
<div class="t" style="left:10.0px;top:522.05px;width:28px;text-align:center;font-size:14px;color:#444;font-family:'Liberation Sans',sans-serif;-webkit-text-stroke:0.25px #444;">13</div>
<div class="t" style="left:10.0px;top:544.23px;width:28px;text-align:center;font-size:14px;color:#444;font-family:'Liberation Sans',sans-serif;-webkit-text-stroke:0.25px #444;">14</div>
<div class="t" style="left:10.0px;top:566.41px;width:28px;text-align:center;font-size:14px;color:#444;font-family:'Liberation Sans',sans-serif;-webkit-text-stroke:0.25px #444;">15</div>
<div class="t" style="left:10.0px;top:588.59px;width:28px;text-align:center;font-size:14px;color:#444;font-family:'Liberation Sans',sans-serif;-webkit-text-stroke:0.25px #444;">16</div>
<div class="t" style="left:10.0px;top:610.77px;width:28px;text-align:center;font-size:14px;color:#444;font-family:'Liberation Sans',sans-serif;-webkit-text-stroke:0.25px #444;">17</div>
<div class="t" style="left:10.0px;top:632.95px;width:28px;text-align:center;font-size:14px;color:#444;font-family:'Liberation Sans',sans-serif;-webkit-text-stroke:0.25px #444;">18</div>
<div class="t" style="left:10.0px;top:655.13px;width:28px;text-align:center;font-size:14px;color:#444;font-family:'Liberation Sans',sans-serif;-webkit-text-stroke:0.25px #444;">19</div>
<div class="t" style="left:10.0px;top:677.31px;width:28px;text-align:center;font-size:14px;color:#444;font-family:'Liberation Sans',sans-serif;-webkit-text-stroke:0.25px #444;">20</div>
<div class="t" style="left:10.0px;top:699.49px;width:28px;text-align:center;font-size:14px;color:#444;font-family:'Liberation Sans',sans-serif;-webkit-text-stroke:0.25px #444;">21</div>
<div class="t" style="left:144.0px;top:223.3px;width:400px;text-align:center;font-size:15px;color:#333;font-family:'Liberation Sans',sans-serif;-webkit-text-stroke:0.25px #333;"><span id="f28" style="display:inline-block;transform:scaleX(1.0639);transform-origin:center">Inventaire de l'ameublement</span></div>
<div class="t" style="left:39.0px;top:254.4px;width:140px;text-align:center;font-size:16.6px;color:#111;font-family:'Liberation Serif',serif;-webkit-text-stroke:0.3px #111;">Article</div>
<div class="t" style="left:150.5px;top:254.4px;width:140px;text-align:center;font-size:16.6px;color:#111;font-family:'Liberation Serif',serif;-webkit-text-stroke:0.3px #111;">Prix</div>
<div class="t" style="left:222.0px;top:254.4px;width:140px;text-align:center;font-size:16.6px;color:#111;font-family:'Liberation Serif',serif;-webkit-text-stroke:0.3px #111;">Quantité</div>
<div class="t" style="left:369.5px;top:254.4px;width:140px;text-align:center;font-size:16.6px;color:#111;font-family:'Liberation Serif',serif;-webkit-text-stroke:0.3px #111;">Sous-total</div>
<div class="t" style="left:452.25px;top:254.4px;width:140px;text-align:center;font-size:16.6px;color:#111;font-family:'Liberation Serif',serif;-webkit-text-stroke:0.3px #111;">Taxe</div>
<div class="t" style="left:535.0px;top:254.4px;width:140px;text-align:center;font-size:16.6px;color:#111;font-family:'Liberation Serif',serif;-webkit-text-stroke:0.3px #111;">Total</div>
<div class="t" style="left:319.0px;top:243.1px;width:80px;text-align:center;font-size:16.6px;color:#111;font-family:'Liberation Serif',serif;-webkit-text-stroke:0.3px #111;">Date</div>
<div class="t" style="left:319.0px;top:266.6px;width:80px;text-align:center;font-size:16.6px;color:#111;font-family:'Liberation Serif',serif;-webkit-text-stroke:0.3px #111;">d'achat</div>
<div class="t" style="left:54.5px;top:287.9px;font-size:16.6px;color:#111;font-family:'Liberation Serif',serif;-webkit-text-stroke:0.3px #111;">Chaise droite</div>
<div class="t" style="left:158px;top:287.4px;width:100px;text-align:right;font-size:17.2px;color:#111;font-family:'Liberation Serif',serif;-webkit-text-stroke:0.3px #111;">65,5</div>
<div class="t" style="left:206.5px;top:287.4px;width:100px;text-align:right;font-size:17.2px;color:#111;font-family:'Liberation Serif',serif;-webkit-text-stroke:0.3px #111;">10</div>
<div class="t" style="left:292.5px;top:287.4px;width:100px;text-align:right;font-size:17.2px;color:#111;font-family:'Liberation Serif',serif;-webkit-text-stroke:0.3px #111;">14-févr</div>
<div class="t" style="left:382px;top:287.4px;width:100px;text-align:right;font-size:17.2px;color:#111;font-family:'Liberation Serif',serif;-webkit-text-stroke:0.3px #111;">655</div>
<div class="t" style="left:458px;top:287.4px;width:100px;text-align:right;font-size:17.2px;color:#111;font-family:'Liberation Serif',serif;-webkit-text-stroke:0.3px #111;">98,25</div>
<div class="t" style="left:546.5px;top:287.4px;width:100px;text-align:right;font-size:17.2px;color:#111;font-family:'Liberation Serif',serif;-webkit-text-stroke:0.3px #111;">753,25</div>
<div class="t" style="left:54.5px;top:312.4px;font-size:16.6px;color:#111;font-family:'Liberation Serif',serif;-webkit-text-stroke:0.3px #111;">Chaise ajustable</div>
<div class="t" style="left:158px;top:311.9px;width:100px;text-align:right;font-size:17.2px;color:#111;font-family:'Liberation Serif',serif;-webkit-text-stroke:0.3px #111;">275</div>
<div class="t" style="left:206.5px;top:311.9px;width:100px;text-align:right;font-size:17.2px;color:#111;font-family:'Liberation Serif',serif;-webkit-text-stroke:0.3px #111;">4</div>
<div class="t" style="left:292.5px;top:311.9px;width:100px;text-align:right;font-size:17.2px;color:#111;font-family:'Liberation Serif',serif;-webkit-text-stroke:0.3px #111;">14-févr</div>
<div class="t" style="left:382px;top:311.9px;width:100px;text-align:right;font-size:17.2px;color:#111;font-family:'Liberation Serif',serif;-webkit-text-stroke:0.3px #111;">1100</div>
<div class="t" style="left:458px;top:311.9px;width:100px;text-align:right;font-size:17.2px;color:#111;font-family:'Liberation Serif',serif;-webkit-text-stroke:0.3px #111;">165</div>
<div class="t" style="left:546.5px;top:311.9px;width:100px;text-align:right;font-size:17.2px;color:#111;font-family:'Liberation Serif',serif;-webkit-text-stroke:0.3px #111;">1265</div>
<div class="t" style="left:54.5px;top:336.4px;font-size:16.6px;color:#111;font-family:'Liberation Serif',serif;-webkit-text-stroke:0.3px #111;">Bureau</div>
<div class="t" style="left:158px;top:335.9px;width:100px;text-align:right;font-size:17.2px;color:#111;font-family:'Liberation Serif',serif;-webkit-text-stroke:0.3px #111;">350,95</div>
<div class="t" style="left:206.5px;top:335.9px;width:100px;text-align:right;font-size:17.2px;color:#111;font-family:'Liberation Serif',serif;-webkit-text-stroke:0.3px #111;">4</div>
<div class="t" style="left:292.5px;top:335.9px;width:100px;text-align:right;font-size:17.2px;color:#111;font-family:'Liberation Serif',serif;-webkit-text-stroke:0.3px #111;">14-févr</div>
<div class="t" style="left:382px;top:335.9px;width:100px;text-align:right;font-size:17.2px;color:#111;font-family:'Liberation Serif',serif;-webkit-text-stroke:0.3px #111;">1403,8</div>
<div class="t" style="left:458px;top:335.9px;width:100px;text-align:right;font-size:17.2px;color:#111;font-family:'Liberation Serif',serif;-webkit-text-stroke:0.3px #111;">210,57</div>
<div class="t" style="left:546.5px;top:335.9px;width:100px;text-align:right;font-size:17.2px;color:#111;font-family:'Liberation Serif',serif;-webkit-text-stroke:0.3px #111;">1614,37</div>
<div class="t" style="left:54.5px;top:360.9px;font-size:16.6px;color:#111;font-family:'Liberation Serif',serif;-webkit-text-stroke:0.3px #111;">Chaise droite</div>
<div class="t" style="left:158px;top:360.4px;width:100px;text-align:right;font-size:17.2px;color:#111;font-family:'Liberation Serif',serif;-webkit-text-stroke:0.3px #111;">45</div>
<div class="t" style="left:206.5px;top:360.4px;width:100px;text-align:right;font-size:17.2px;color:#111;font-family:'Liberation Serif',serif;-webkit-text-stroke:0.3px #111;">2</div>
<div class="t" style="left:292.5px;top:360.4px;width:100px;text-align:right;font-size:17.2px;color:#111;font-family:'Liberation Serif',serif;-webkit-text-stroke:0.3px #111;">24-avr</div>
<div class="t" style="left:382px;top:360.4px;width:100px;text-align:right;font-size:17.2px;color:#111;font-family:'Liberation Serif',serif;-webkit-text-stroke:0.3px #111;">90</div>
<div class="t" style="left:458px;top:360.4px;width:100px;text-align:right;font-size:17.2px;color:#111;font-family:'Liberation Serif',serif;-webkit-text-stroke:0.3px #111;">13,5</div>
<div class="t" style="left:546.5px;top:360.4px;width:100px;text-align:right;font-size:17.2px;color:#111;font-family:'Liberation Serif',serif;-webkit-text-stroke:0.3px #111;">103,5</div>
<div class="t" style="left:54.5px;top:385.4px;font-size:16.6px;color:#111;font-family:'Liberation Serif',serif;-webkit-text-stroke:0.3px #111;">Chaise ajustable</div>
<div class="t" style="left:158px;top:384.9px;width:100px;text-align:right;font-size:17.2px;color:#111;font-family:'Liberation Serif',serif;-webkit-text-stroke:0.3px #111;">285,55</div>
<div class="t" style="left:206.5px;top:384.9px;width:100px;text-align:right;font-size:17.2px;color:#111;font-family:'Liberation Serif',serif;-webkit-text-stroke:0.3px #111;">1</div>
<div class="t" style="left:292.5px;top:384.9px;width:100px;text-align:right;font-size:17.2px;color:#111;font-family:'Liberation Serif',serif;-webkit-text-stroke:0.3px #111;">06-mai</div>
<div class="t" style="left:382px;top:384.9px;width:100px;text-align:right;font-size:17.2px;color:#111;font-family:'Liberation Serif',serif;-webkit-text-stroke:0.3px #111;">285,55</div>
<div class="t" style="left:458px;top:384.9px;width:100px;text-align:right;font-size:17.2px;color:#111;font-family:'Liberation Serif',serif;-webkit-text-stroke:0.3px #111;">42,8325</div>
<div class="t" style="left:546.5px;top:384.9px;width:100px;text-align:right;font-size:17.2px;color:#111;font-family:'Liberation Serif',serif;-webkit-text-stroke:0.3px #111;">328,3825</div>
<div class="t" style="left:54.5px;top:409.7px;font-size:16.6px;color:#111;font-family:'Liberation Serif',serif;-webkit-text-stroke:0.3px #111;">Bureau</div>
<div class="t" style="left:158px;top:409.2px;width:100px;text-align:right;font-size:17.2px;color:#111;font-family:'Liberation Serif',serif;-webkit-text-stroke:0.3px #111;">425</div>
<div class="t" style="left:206.5px;top:409.2px;width:100px;text-align:right;font-size:17.2px;color:#111;font-family:'Liberation Serif',serif;-webkit-text-stroke:0.3px #111;">1</div>
<div class="t" style="left:292.5px;top:409.2px;width:100px;text-align:right;font-size:17.2px;color:#111;font-family:'Liberation Serif',serif;-webkit-text-stroke:0.3px #111;">06-mai</div>
<div class="t" style="left:382px;top:409.2px;width:100px;text-align:right;font-size:17.2px;color:#111;font-family:'Liberation Serif',serif;-webkit-text-stroke:0.3px #111;">425</div>
<div class="t" style="left:458px;top:409.2px;width:100px;text-align:right;font-size:17.2px;color:#111;font-family:'Liberation Serif',serif;-webkit-text-stroke:0.3px #111;">63,75</div>
<div class="t" style="left:546.5px;top:409.2px;width:100px;text-align:right;font-size:17.2px;color:#111;font-family:'Liberation Serif',serif;-webkit-text-stroke:0.3px #111;">488,75</div>
<div style="left:37px;top:239.5px;width:613.5px;height:2px;background:#217346"></div>
<div style="left:37px;top:427.5px;width:613.5px;height:2px;background:#217346"></div>
<div style="left:37px;top:239.5px;width:2px;height:190px;background:#217346"></div>
<div style="left:648.5px;top:239.5px;width:2px;height:190px;background:#217346"></div>
<div style="left:646px;top:425.5px;width:6px;height:6px;background:#217346;border:1px solid #fff"></div>
<div style="left:1121.5px;top:183px;width:23.5px;height:525px;background:#e6e6e6"></div>
<div style="left:1125.5px;top:185px;width:16px;height:16.5px;background:#fff;border:1px solid #c6c6c6"></div>
<svg style="left:1129px;top:190px;" width="9" height="6" viewBox="0 0 9 6"><path d="M0.5 5L4.5 1L8.5 5Z" fill="#777"/></svg>
<div style="left:1125.5px;top:666px;width:16px;height:26.5px;background:#dadada"></div>
<div style="left:1125.5px;top:201.5px;width:16px;height:465px;background:#fff;border:1px solid #c6c6c6"></div>
<div style="left:1125.5px;top:692px;width:16px;height:15.5px;background:#fff;border:1px solid #c6c6c6"></div>
<svg style="left:1129px;top:697px;" width="9" height="6" viewBox="0 0 9 6"><path d="M0.5 1L4.5 5L8.5 1Z" fill="#777"/></svg>
<div style="left:1121px;top:201px;width:1px;height:507px;background:#c6c6c6"></div>
<div style="left:10px;top:708px;width:1135px;height:31px;background:#e6e6e6"></div>
<div style="left:10px;top:708px;width:1111.5px;height:1px;background:#bdbdbd"></div>
<svg style="left:39px;top:718px;" width="8" height="10" viewBox="0 0 8 10"><path d="M6 1L2 5L6 9Z" fill="#bbb"/></svg>
<svg style="left:70px;top:718px;" width="8" height="10" viewBox="0 0 8 10"><path d="M2 1L6 5L2 9Z" fill="#bbb"/></svg>
<div style="left:121px;top:708px;width:68px;height:27px;background:#fff;border-left:1px solid #b5b5b5;border-right:1px solid #b5b5b5"></div>
<div style="left:121px;top:732.5px;width:68px;height:2.5px;background:#217346"></div>
<div class="t" style="left:120.6px;top:717.57px;width:68px;text-align:center;font-size:13.5px;color:#217346;font-family:'Liberation Sans',sans-serif;-webkit-text-stroke:0.25px #217346;font-weight:bold"><span id="f29" style="display:inline-block;transform:scaleX(1.0201);transform-origin:center">Feuil1</span></div>
<div class="t" style="left:192.2px;top:717.57px;width:60px;text-align:center;font-size:13.5px;color:#444;font-family:'Liberation Sans',sans-serif;-webkit-text-stroke:0.25px #444;"><span id="f30" style="display:inline-block;transform:scaleX(0.9869);transform-origin:center">Feuil2</span></div>
<div style="left:256.5px;top:713px;width:1px;height:20px;background:#bdbdbd"></div>
<div class="t" style="left:259.7px;top:717.57px;width:60px;text-align:center;font-size:13.5px;color:#444;font-family:'Liberation Sans',sans-serif;-webkit-text-stroke:0.25px #444;"><span id="f31" style="display:inline-block;transform:scaleX(0.9869);transform-origin:center">Feuil3</span></div>
<div style="left:323px;top:713px;width:1px;height:20px;background:#bdbdbd"></div>
<svg style="left:359px;top:713px;" width="20" height="20" viewBox="0 0 20 20"><circle cx="10" cy="10" r="8.3" fill="none" stroke="#666" stroke-width="1.4"/><path d="M10 5.5V14.5M5.5 10H14.5" stroke="#666" stroke-width="1.6"/></svg>
<svg style="left:689px;top:714px;" width="4" height="18" viewBox="0 0 4 18"><circle cx="2" cy="3" r="1" fill="#aaa"/><circle cx="2" cy="9" r="1" fill="#aaa"/><circle cx="2" cy="15" r="1" fill="#aaa"/></svg>
<div style="left:709.5px;top:716px;width:16.5px;height:16px;background:#fff;border:1px solid #c6c6c6"></div>
<svg style="left:714px;top:720px;" width="6" height="9" viewBox="0 0 6 9"><path d="M5 0.5L1 4.5L5 8.5Z" fill="#666"/></svg>
<div style="left:1070px;top:716px;width:36px;height:16px;background:#dadada"></div>
<div style="left:725.5px;top:716px;width:347px;height:16px;background:#fff;border:1px solid #c6c6c6"></div>
<div style="left:1105px;top:716px;width:16.5px;height:16px;background:#fff;border:1px solid #c6c6c6"></div>
<svg style="left:1111px;top:720px;" width="6" height="9" viewBox="0 0 6 9"><path d="M1 0.5L5 4.5L1 8.5Z" fill="#666"/></svg>
<div style="left:10px;top:739px;width:1135px;height:24px;background:#f1f1f1"></div>
<div style="left:10px;top:739px;width:1135px;height:1px;background:#d5d5d5"></div>
<div class="t" style="left:18px;top:744.92px;font-size:12.5px;color:#555;font-family:'Liberation Sans',sans-serif;-webkit-text-stroke:0.25px #555;">Prêt</div>
<svg style="left:61px;top:742px;" width="18" height="17" viewBox="0 0 18 17"><circle cx="4" cy="4" r="3" fill="#888"/><rect x="8" y="2" width="8" height="4" fill="#888"/><rect x="1.5" y="8.5" width="15" height="8" fill="none" stroke="#999"/><path d="M5 10V16M8.5 12V16M12 10V16" stroke="#999"/></svg>
<div class="t" style="left:409px;top:744.92px;font-size:12.5px;color:#444;font-family:'Liberation Sans',sans-serif;-webkit-text-stroke:0.25px #444;"><span id="f32" style="display:inline-block;transform:scaleX(0.9826);transform-origin:left">Moyenne : 6517,014028</span></div>
<div class="t" style="left:560.2px;top:744.92px;font-size:12.5px;color:#444;font-family:'Liberation Sans',sans-serif;-webkit-text-stroke:0.25px #444;"><span id="f33" style="display:inline-block;transform:scaleX(0.9848);transform-origin:left">Nb (non vides) : 49</span></div>
<div class="t" style="left:683px;top:744.92px;font-size:12.5px;color:#444;font-family:'Liberation Sans',sans-serif;-webkit-text-stroke:0.25px #444;"><span id="f34" style="display:inline-block;transform:scaleX(0.9495);transform-origin:left">Somme : 234612,505</span></div>
<div style="left:818px;top:739.5px;width:41px;height:23px;background:#d3d3d3"></div>
<svg style="left:830px;top:743px;" width="17" height="15" viewBox="0 0 17 15"><rect x="0.5" y="0.5" width="16" height="14" fill="none" stroke="#666"/><path d="M0.5 5.2H16.5M0.5 9.8H16.5M5.8 0.5V14.5M11.2 0.5V14.5" stroke="#666"/></svg>
<svg style="left:872px;top:743px;" width="18" height="15" viewBox="0 0 18 15"><rect x="0.5" y="0.5" width="17" height="14" fill="none" stroke="#777"/><rect x="4.5" y="3" width="9" height="9" fill="none" stroke="#777"/><path d="M6 5.5H12M6 7.5H12M6 9.5H12" stroke="#777" stroke-width=".8"/></svg>
<svg style="left:915px;top:743px;" width="17" height="16" viewBox="0 0 17 16"><rect x="0.5" y="0.5" width="15" height="14" fill="none" stroke="#777"/><path d="M0.5 8.5H15.5M4.5 0.5V8.5M8.5 0.5V8.5" fill="none" stroke="#777"/></svg>
<div style="left:950px;top:750px;width:7px;height:1.6px;background:#555"></div>
<div style="left:960.5px;top:750px;width:111px;height:1px;background:#aaa"></div>
<div style="left:1014px;top:744px;width:4.5px;height:12px;background:#555"></div>
<div style="left:1076px;top:750px;width:10px;height:1.6px;background:#555"></div>
<div style="left:1080.2px;top:745.8px;width:1.6px;height:10px;background:#555"></div>
<div class="t" style="left:1103px;top:744.92px;font-size:12.5px;color:#555;font-family:'Liberation Sans',sans-serif;-webkit-text-stroke:0.25px #555;"><span id="f35" style="display:inline-block;transform:scaleX(0.9421);transform-origin:left">100 %</span></div>
<div style="left:10px;top:762px;width:1135px;height:1px;background:#cfe0ea"></div>
<div style="left:10px;top:763px;width:1135px;height:37px;background:#0f4c7b"></div>
<div style="left:10px;top:763px;width:53px;height:37px;background:#0d4a79"></div>
<div style="left:63px;top:763px;width:354.5px;height:37px;background:#38719a"></div>
<svg style="left:27px;top:776px;" width="19" height="19" viewBox="0 0 19 19"><path d="M0 0.8H8.6V8.7H0Z M10.2 0H19V8.7H10.2Z M0 10.3H8.6V18.2H0Z M10.2 10.3H19V19H10.2Z" fill="#fff"/></svg>
<svg style="left:73px;top:773px;" width="25" height="25" viewBox="0 0 25 25"><circle cx="12.5" cy="12.5" r="10" fill="none" stroke="#e8f2f8" stroke-width="3"/></svg>
<div class="t" style="left:103.6px;top:777.79px;font-size:16.2px;color:#a3c1d8;font-family:'Liberation Sans',sans-serif;-webkit-text-stroke:0.25px #a3c1d8;"><span id="f36" style="display:inline-block;transform:scaleX(1.0020);transform-origin:left">Taper ici pour rechercher</span></div>
<svg style="left:389px;top:776px;" width="14" height="19" viewBox="0 0 14 19"><rect x="4" y="0.8" width="6" height="11" rx="3" fill="none" stroke="#8fb3cc" stroke-width="1.4"/><path d="M1.5 8.5Q1.5 14.5 7 14.5Q12.5 14.5 12.5 8.5M7 14.5V18.5M4 18.5H10" fill="none" stroke="#8fb3cc" stroke-width="1.4"/></svg>
<svg style="left:432px;top:777px;" width="25" height="16" viewBox="0 0 25 16"><rect x="5.5" y="1" width="14" height="14" fill="none" stroke="#fff" stroke-width="1.5"/><path d="M3 3.5V12.5M22 3.5V12.5" stroke="#fff" stroke-width="1.5"/></svg>
<svg style="left:489px;top:774px;" width="23" height="24" viewBox="0 0 23 24"><path d="M12 1C5 1 1 6.5 1 12.5C1 19 6 23 12 23C16 23 19.5 21.5 21.5 19.5V15C19.5 17 16.5 18.5 13 18.5C9 18.5 7 16.5 6.5 13.5H22.5V11.5C22.5 5 18 1 12 1ZM6.8 9.5C7.5 6.5 9.5 5 12 5C15 5 17 6.5 17.2 9.5Z" fill="#1e8fe1"/></svg>
<svg style="left:543px;top:775px;" width="25" height="20" viewBox="0 0 25 20"><path d="M1 1.5H9L11 3.5H24V19H1Z" fill="#e8b545"/><rect x="1" y="5" width="23" height="14" fill="#f7d36f"/><rect x="6" y="11" width="13" height="6" fill="#2a7ab8"/></svg>
<svg style="left:597px;top:776px;" width="26" height="20" viewBox="0 0 26 20"><rect x="14" y="1" width="10" height="18" fill="#fff"/><path d="M15.5 4H22.5M15.5 7H22.5M15.5 10H22.5M15.5 13H22.5M15.5 16H22.5" stroke="#7a8fb8" stroke-width="1"/><rect x="0.5" y="2.5" width="15" height="15" fill="#2b579a"/><text x="2.5" y="14.5" font-family="Liberation Sans" font-size="11.5" font-weight="bold" fill="#fff">w</text></svg>
<div style="left:637.5px;top:763px;width:53px;height:37px;background:#1a5f9c"></div>
<svg style="left:651px;top:776px;" width="26" height="20" viewBox="0 0 26 20"><rect x="14" y="1" width="10" height="18" fill="#e8f2ea" stroke="#cfe8d6" stroke-width="1"/><path d="M15.5 4H22.5M15.5 7H22.5M15.5 10H22.5M15.5 13H22.5M15.5 16H22.5M19 1V19" stroke="#6a9a7a" stroke-width="1"/><rect x="0.5" y="2.5" width="15" height="15" fill="#217346"/><text x="3.5" y="14.5" font-family="Liberation Sans" font-size="11.5" font-weight="bold" fill="#fff">X</text></svg>
<svg style="left:895px;top:781px;" width="15" height="9" viewBox="0 0 15 9"><path d="M1 8L7.5 1.5L14 8" fill="none" stroke="#fff" stroke-width="1.6"/></svg>
<svg style="left:919px;top:778px;" width="21" height="16" viewBox="0 0 21 16"><rect x="6.5" y="1" width="13.5" height="9.5" fill="none" stroke="#fff" stroke-width="1.3"/><path d="M13 10.5V14.5M9 14.5H17M1 4.5H5.5V14H1Z" fill="none" stroke="#fff" stroke-width="1.3"/></svg>
<svg style="left:946px;top:778px;" width="20" height="16" viewBox="0 0 20 16"><path d="M1.5 5.5H5L9.5 1.5V14.5L5 10.5H1.5Z" fill="none" stroke="#fff" stroke-width="1.3"/><path d="M12.5 5Q14 8 12.5 11M15 3Q17.5 8 15 13M17.5 1.5Q20.5 8 17.5 14.5" fill="none" stroke="#fff" stroke-width="1.2"/></svg>
<div class="t" style="left:976.3px;top:779.5px;font-size:13px;color:#fff;font-family:'Liberation Sans',sans-serif;-webkit-text-stroke:0.25px #fff;"><span id="f37" style="display:inline-block;transform:scaleX(0.9038);transform-origin:left">FRA</span></div>
<div class="t" style="left:1011.2px;top:769.57px;width:80px;text-align:center;font-size:13.5px;color:#fff;font-family:'Liberation Sans',sans-serif;-webkit-text-stroke:0.25px #fff;"><span id="f38" style="display:inline-block;transform:scaleX(1.0504);transform-origin:center">14:20</span></div>
<div class="t" style="left:1011.2px;top:786.57px;width:80px;text-align:center;font-size:13.5px;color:#fff;font-family:'Liberation Sans',sans-serif;-webkit-text-stroke:0.25px #fff;"><span id="f39" style="display:inline-block;transform:scaleX(0.9788);transform-origin:center">2019-01-25</span></div>
<div style="left:1138px;top:763px;width:1px;height:37px;background:#3f6f94"></div>
<svg style="left:1099px;top:777px;" width="21" height="21" viewBox="0 0 21 21"><path d="M1 1.5H20V15H11.5L8 19V15H1Z" fill="none" stroke="#fff" stroke-width="1.4"/></svg>
<div style="left:657px;top:409.5px;width:488px;height:225px;background:rgba(30,30,30,0.93)"></div>
<div style="left:657px;top:451px;width:488px;height:2px;background:#d8d8d8"></div>
<div style="left:675px;top:417.5px;width:2.5px;height:24px;background:#fff"></div>
<div class="t" style="left:686.5px;top:422.88px;font-size:15.5px;color:#fff;font-family:'Liberation Sans',sans-serif;-webkit-text-stroke:0.25px #fff;"><span id="f40" style="display:inline-block;transform:scaleX(0.9968);transform-origin:left">Appliquer des attributs de texte</span></div>
<div style="left:675px;top:470px;width:45px;height:45px;background:linear-gradient(#3c3c3c,#050505);border:1px solid #444"></div>
<div style="left:675px;top:523.5px;width:45px;height:45px;background:linear-gradient(#3c3c3c,#050505);border:1px solid #444"></div>
<div style="left:675px;top:577px;width:45px;height:45px;background:linear-gradient(#3c3c3c,#050505);border:1px solid #444"></div>
<div class="t" style="left:677.5px;top:476.03px;width:40px;text-align:center;font-size:36px;color:#fff;font-family:'Liberation Sans',sans-serif;-webkit-text-stroke:1px #fff;font-weight:bold">?</div>
<svg style="left:683px;top:533px;" width="30" height="24" viewBox="0 0 30 24"><rect x="0.5" y="1.5" width="4.5" height="4.5" fill="#fff"/><rect x="0.5" y="10" width="4.5" height="4.5" fill="#fff"/><rect x="0.5" y="18.5" width="4.5" height="4.5" fill="#fff"/><rect x="8.5" y="1.5" width="20" height="4.5" fill="#fff"/><rect x="8.5" y="10" width="20" height="4.5" fill="#fff"/><rect x="8.5" y="18.5" width="20" height="4.5" fill="#fff"/></svg>
<svg style="left:684px;top:587px;" width="27" height="26" viewBox="0 0 27 26"><rect x="1.5" y="1.5" width="24" height="23" fill="none" stroke="#fff" stroke-width="2.6"/><path d="M8 5V21M13.5 5V21M19 5V21" stroke="#fff" stroke-width="1.5"/><rect x="5.5" y="13" width="5" height="3" fill="#fff"/><rect x="11" y="16.5" width="5" height="3" fill="#fff"/><rect x="16.5" y="8" width="5" height="3" fill="#fff"/></svg>
<div class="t" style="left:744px;top:473.11px;font-size:17px;color:#fff;font-family:'Liberation Sans',sans-serif;-webkit-text-stroke:0.25px #fff;"><span id="f41" style="display:inline-block;transform:scaleX(1.0424);transform-origin:left">Parfait. Vous allez maintenant appliquer au titre</span></div>
<div class="t" style="left:744px;top:493.01px;font-size:17px;color:#fff;font-family:'Liberation Sans',sans-serif;-webkit-text-stroke:0.25px #fff;"><span id="f42" style="display:inline-block;transform:scaleX(1.0411);transform-origin:left">une taille de 18 points, ainsi que les attributs</span></div>
<div class="t" style="left:744px;top:512.91px;font-size:17px;color:#fff;font-family:'Liberation Sans',sans-serif;-webkit-text-stroke:0.25px #fff;"><span id="f43" style="display:inline-block;transform:scaleX(1.0411);transform-origin:left">'Gras', 'Italique' et 'Souligné'. Tout d'abord,</span></div>
<div class="t" style="left:744px;top:532.81px;font-size:17px;color:#fff;font-family:'Liberation Sans',sans-serif;-webkit-text-stroke:0.25px #fff;"><span id="f44" style="display:inline-block;transform:scaleX(1.0426);transform-origin:left">sélectionnez le titre en cliquant dessus!</span></div>
<svg style="left:746px;top:590px;" width="16" height="18" viewBox="0 0 16 18"><path d="M1 1H7.5L15 9L7.5 17H1L8.5 9Z" fill="#3ea063"/></svg>
<div class="t" style="left:771px;top:591.19px;font-size:17.5px;color:#3ea063;font-family:'Liberation Sans',sans-serif;-webkit-text-stroke:0.25px #3ea063;"><span id="f45" style="display:inline-block;transform:scaleX(1.0023);transform-origin:left">Effectuez l'action demandée.</span></div>
</body></html>
